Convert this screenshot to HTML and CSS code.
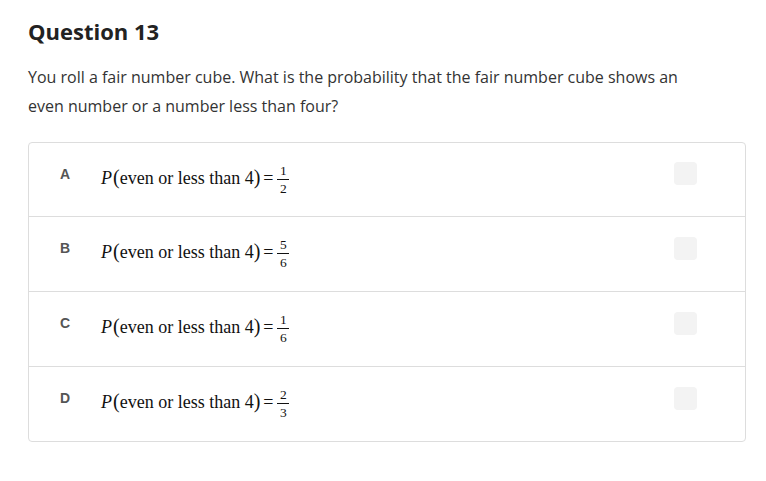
FILE: index.html
```html
<!DOCTYPE html>
<html>
<head>
<meta charset="utf-8">
<link rel="stylesheet" href="styles.css">
</head>
<body>
<div class="page">
  <h1 class="title">Question 13</h1>
  <p class="prompt">You roll a fair number cube. What is the probability that the fair number cube shows an even number or a number less than four?</p>
  <div class="card">
    <div class="row">
      <span class="letter">A</span>
      <span class="math"><i>P</i><span class="paren">(</span>even or less than 4<span class="paren">)</span><span class="eq">=</span><span class="frac"><span class="num">1</span><span class="den">2</span></span></span>
      <span class="box"></span>
    </div>
    <div class="row">
      <span class="letter">B</span>
      <span class="math"><i>P</i><span class="paren">(</span>even or less than 4<span class="paren">)</span><span class="eq">=</span><span class="frac"><span class="num">5</span><span class="den">6</span></span></span>
      <span class="box"></span>
    </div>
    <div class="row">
      <span class="letter">C</span>
      <span class="math"><i>P</i><span class="paren">(</span>even or less than 4<span class="paren">)</span><span class="eq">=</span><span class="frac"><span class="num">1</span><span class="den">6</span></span></span>
      <span class="box"></span>
    </div>
    <div class="row">
      <span class="letter">D</span>
      <span class="math"><i>P</i><span class="paren">(</span>even or less than 4<span class="paren">)</span><span class="eq">=</span><span class="frac"><span class="num">2</span><span class="den">3</span></span></span>
      <span class="box"></span>
    </div>
  </div>
</div>
</body>
</html>
```
FILE: styles.css
```css
html, body { margin: 0; padding: 0; background: #fff; }
.page { padding: 16px 20px 0 28px; font-family: "Open Sans", sans-serif; color: #333; }
.title { margin: 0; font-size: 22px; font-weight: 700; color: #222; line-height: 30px; }
.prompt { margin: 17px 0 0 0; font-size: 16px; line-height: 29px; width: 665px; color: #333; }
.card { margin-top: 21px; width: 716px; border: 1px solid #ddd; border-radius: 4px; }
.row { display: flex; align-items: center; height: 74px; border-top: 1px solid #ddd; }
.row:first-child { border-top: none; height: 73px; }
.letter { width: 72px; padding-left: 31px; box-sizing: border-box; margin-bottom: 12px; font-family: "Liberation Sans", Arial, sans-serif; font-weight: 700; font-size: 14px; line-height: 16px; color: #555; }
.math { flex: 1; font-family: "Liberation Serif", "Times New Roman", serif; font-size: 18px; line-height: 20px; color: #111; white-space: nowrap; }
.math i { font-style: italic; margin-right: 1px; }
.paren { font-size: 20px; }
.eq { margin: 0 4px 0 3px; }
.frac { display: inline-flex; flex-direction: column; align-items: center; vertical-align: 9px; font-family: "Liberation Serif", "Times New Roman", serif; font-size: 13.5px; line-height: 12px; }
.num { padding: 0 1px 2px; border-bottom: 1px solid #111; min-width: 10px; text-align: center; }
.den { padding-top: 3px; }
.box { width: 23px; height: 23px; background: #f3f3f3; border-radius: 4px; margin-right: 48px; margin-bottom: 12px; }
```
